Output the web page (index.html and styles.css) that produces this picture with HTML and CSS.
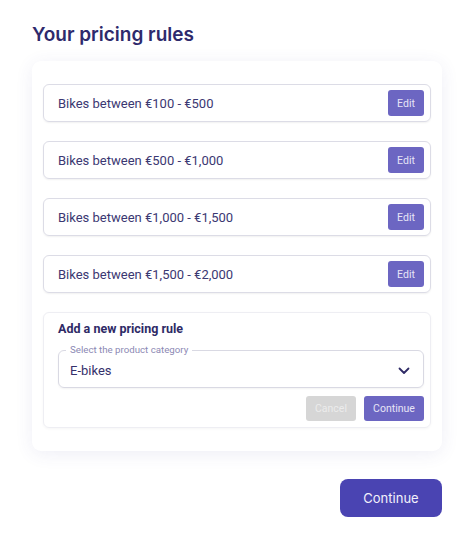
FILE: index.html
```html
<!DOCTYPE html>
<html>
<head>
	<title>Pricing rules</title>
	<link rel="stylesheet" href="styles.css">
</head>
<body>
	<div class="page">
		<h1 class="title">Your pricing rules</h1>
		<div class="card">
			<div class="rule">
				<span>Bikes between €100 - €500</span>
				<button class="edit">Edit</button>
			</div>
			<div class="rule">
				<span>Bikes between €500 - €1,000</span>
				<button class="edit">Edit</button>
			</div>
			<div class="rule">
				<span>Bikes between €1,000 - €1,500</span>
				<button class="edit">Edit</button>
			</div>
			<div class="rule">
				<span>Bikes between €1,500 - €2,000</span>
				<button class="edit">Edit</button>
			</div>
			<div class="new_rule">
				<div class="new_title">Add a new pricing rule</div>
				<div class="select">
					<span class="select_label">Select the product category</span>
					<span class="select_value">E-bikes</span>
					<svg class="chevron" width="12" height="8" viewBox="0 0 12 8"><path d="M1.5 1.5 L6 6 L10.5 1.5" fill="none" stroke="#2f2b66" stroke-width="1.8" stroke-linecap="round" stroke-linejoin="round"/></svg>
				</div>
				<div class="actions">
					<button class="cancel">Cancel</button>
					<button class="small_continue">Continue</button>
				</div>
			</div>
		</div>
		<div class="footer">
			<button class="continue">Continue</button>
		</div>
	</div>
</body>
</html>
```

FILE: styles.css
```css
body{
	margin: 0;
	background: #fff;
	font-family: Roboto, "Liberation Sans", sans-serif;
}
.page{
	padding: 22px 32px 0 32px;
	width: 410px;
}
.title{
	margin: 0;
	font-family: Inter, "Liberation Sans", sans-serif;
	font-size: 19px;
	font-weight: 600;
	line-height: 26px;
	color: #2e2a6c;
}
.card{
	margin-top: 13px;
	padding: 23px 11px;
	background: #fff;
	border-radius: 9px;
	box-shadow: 0 3px 18px rgba(70, 70, 150, 0.09);
	display: flex;
	flex-direction: column;
	gap: 19px;
}
.rule{
	height: 38px;
	box-sizing: border-box;
	border: 1px solid #dcdce6;
	border-radius: 6px;
	box-shadow: 0 1px 2px rgba(0, 0, 0, 0.06);
	display: flex;
	align-items: center;
	justify-content: space-between;
	padding: 0 6px 0 14px;
	font-size: 13px;
	color: #3b3872;
}
.edit{
	width: 36px;
	height: 26px;
	border: none;
	border-radius: 3px;
	background: #6c66c2;
	color: #e6e4f6;
	font-family: Roboto, "Liberation Sans", sans-serif;
	font-size: 10.5px;
	padding: 0;
}
.new_rule{
	border: 1px solid #eeeef3;
	border-radius: 6px;
	padding: 8px 6px 6px 14px;
	box-shadow: 0 1px 3px rgba(0, 0, 0, 0.04);
}
.new_title{
	font-size: 12.5px;
	font-weight: 700;
	color: #2e2a66;
	line-height: 15px;
}
.select{
	position: relative;
	margin-top: 14px;
	height: 38px;
	box-sizing: border-box;
	border: 1px solid #d9d9e3;
	border-radius: 6px;
	display: flex;
	align-items: center;
	justify-content: space-between;
	padding: 3px 13px 0 11px;
	box-shadow: 0 1px 2px rgba(0, 0, 0, 0.05);
}
.select_label{
	position: absolute;
	left: 7px;
	top: -7px;
	padding: 0 4px;
	background: #fff;
	font-size: 9.7px;
	line-height: 12px;
	color: #8c89b4;
}
.select_value{
	font-size: 13px;
	color: #34316b;
}
.actions{
	display: flex;
	justify-content: flex-end;
	gap: 8px;
	margin-top: 8px;
}
.actions button{
	height: 25px;
	border: none;
	border-radius: 3px;
	font-family: Roboto, "Liberation Sans", sans-serif;
	font-size: 10.5px;
	padding: 0;
}
.cancel{
	width: 50px;
	background: #d6d6d6;
	color: #ececec;
}
.small_continue{
	width: 60px;
	background: #6c66c2;
	color: #e6e4f6;
}
.footer{
	display: flex;
	justify-content: flex-end;
	margin-top: 28px;
}
.continue{
	width: 102px;
	height: 38px;
	border: none;
	border-radius: 8px;
	background: #4a44b2;
	color: #f2f1fb;
	font-family: Inter, "Liberation Sans", sans-serif;
	font-size: 13px;
	padding: 0;
}
```
